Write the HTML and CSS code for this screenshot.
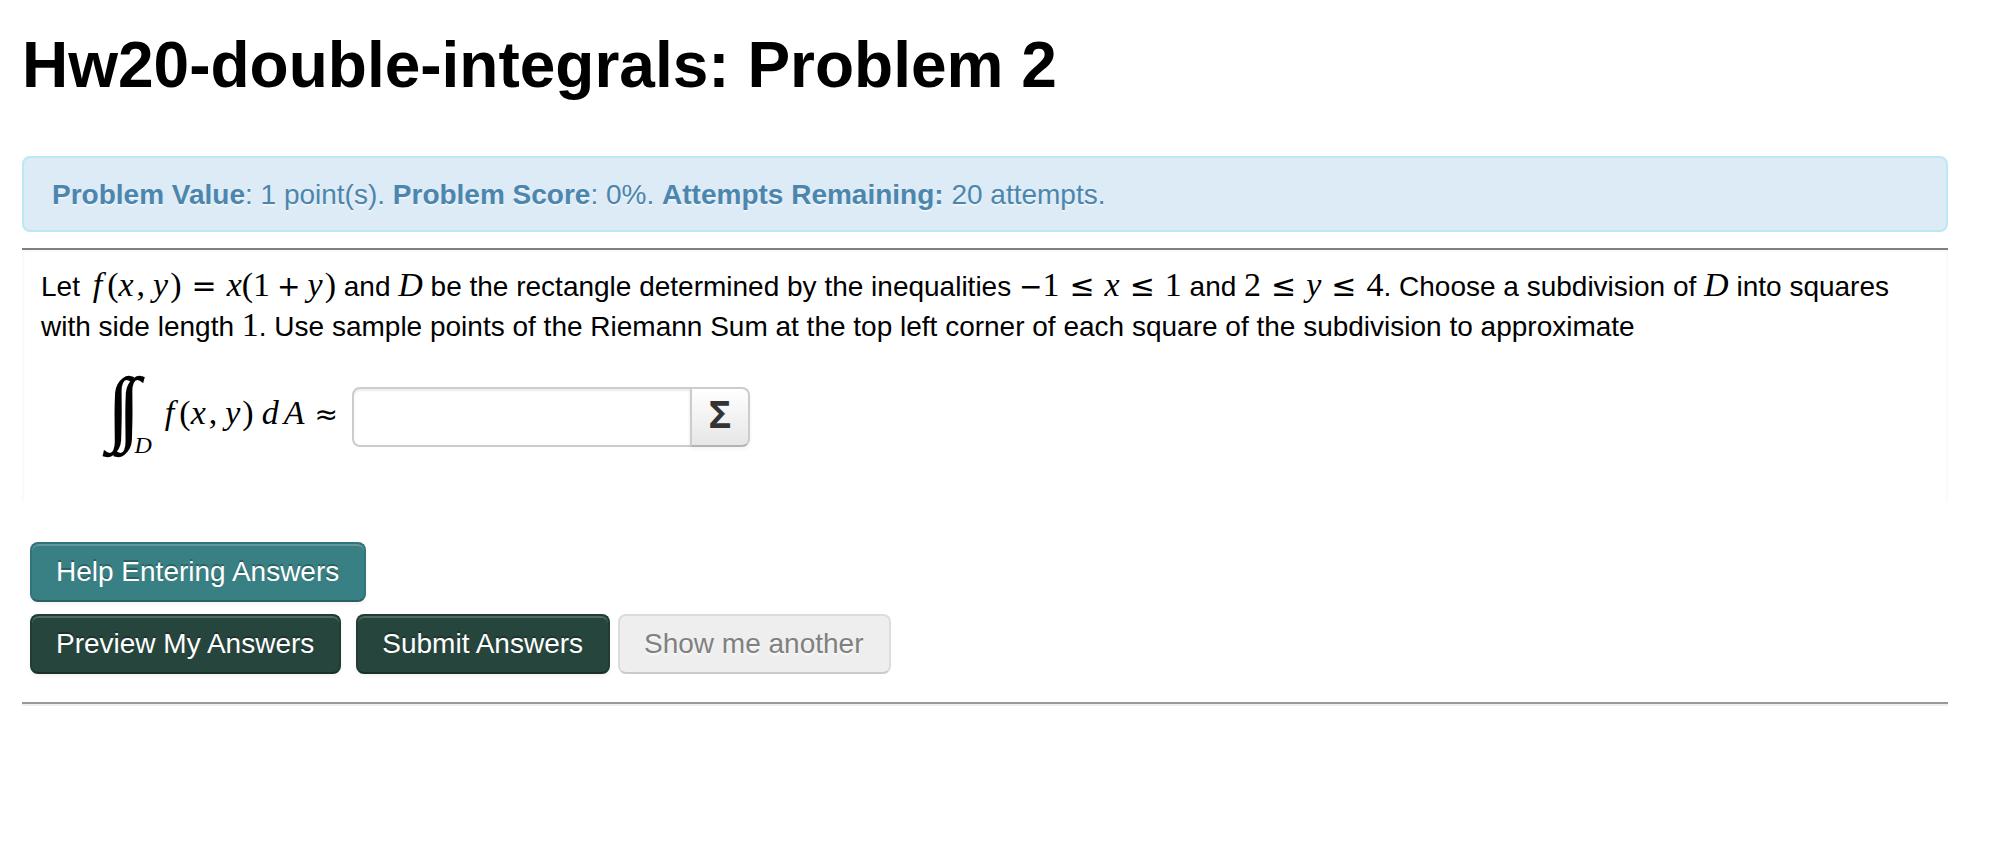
FILE: index.html
```html
<!DOCTYPE html>
<html lang="en">
<head>
<meta charset="utf-8">
<title>Hw20-double-integrals: Problem 2</title>
<link rel="stylesheet" href="styles.css">
</head>
<body>
<main class="page">
  <h1 class="title">Hw20-double-integrals: Problem 2</h1>
  <div class="alert"><strong>Problem Value</strong>: 1 point(s). <strong>Problem Score</strong>: 0%. <strong>Attempts Remaining:</strong> 20 attempts.</div>
  <form class="problem-form">
    <section class="problem">
      <p class="statement">Let <span class="math"><i class="fn">f</i>(<i class="first">x</i>,<i class="arg">y</i>)<span class="rel">=</span><i>x</i>(1<span class="op">+</span><i class="last">y</i>)</span> and <span class="math"><i>D</i></span> be the rectangle determined by the inequalities <span class="math"><span class="sign">−</span>1<span class="rel">≤</span><i>x</i><span class="rel">≤</span>1</span> and <span class="math">2<span class="rel">≤</span><i>y</i><span class="rel">≤</span>4</span>. Choose a subdivision of <span class="math"><i>D</i></span> into squares with side length <span class="math">1</span>. Use sample points of the Riemann Sum at the top left corner of each square of the subdivision to approximate</p>
      <div class="answer">
        <label class="math formula" for="answer"><span class="integral">∫</span><span class="integral">∫</span><sub class="domain">D</sub><span class="integrand"><i class="fn">f</i>(<i class="first">x</i>,<i class="arg">y</i>)<i class="differential">d</i><i class="area">A</i><span class="approx">≈</span></span></label>
        <input class="answer-input" id="answer" type="text">
        <button class="editor-button" type="button" aria-label="Equation editor">Σ</button>
      </div>
    </section>
    <div class="actions">
      <button class="button button-info" type="button">Help Entering Answers</button>
    </div>
    <div class="actions">
      <button class="button button-primary" type="button">Preview My Answers</button>
      <button class="button button-primary button-submit" type="submit">Submit Answers</button>
      <button class="button button-disabled" type="button" disabled>Show me another</button>
    </div>
  </form>
  <hr class="divider">
</main>
</body>
</html>
```
FILE: styles.css
```css
* { box-sizing: border-box; }
body {
  margin: 0;
  background: #fff;
  color: #000;
  font: 28px/40px "Liberation Sans", Arial, sans-serif;
}
.page { padding: 25px 55px 40px 22px; }
.title { margin: 0 0 51px; font-size: 64px; line-height: 80px; font-weight: bold; }
.alert {
  padding: 17px 28px 15px;
  border: 2px solid #bce8f1;
  border-radius: 8px;
  background: #dcebf6;
  color: #4c86ad;
  text-shadow: 0 2px 0 rgba(255, 255, 255, .5);
}
.problem-form { margin-top: 16px; border-top: 2px solid #808080; }
.problem {
  padding: 17px 17px 55px;
  border: solid #fafafa;
  border-width: 0 2px;
  box-shadow: inset 0 2px 2px rgba(0, 0, 0, .03);
}
.statement { margin: 0; }
.math { font-family: "Liberation Serif", "Times New Roman", serif; font-size: 34px; line-height: 1; white-space: nowrap; }
.fn { margin: 0 5px; }
.first { margin-right: 3px; }
.arg { margin: 0 2px 0 8px; }
.last { margin-right: 2px; }
.rel, .op, .sign, .approx { font-family: "DejaVu Sans", sans-serif; font-size: 28px; }
.rel { margin: 0 10px; font-size: 30px; }
.op { margin: 0 7px; }
.answer { display: flex; align-items: center; height: 60px; margin: 40px 0 0 66px; }
.formula { display: flex; align-items: center; height: 60px; }
.integral { margin-right: -12px; padding-bottom: 20px; font-size: 83px; line-height: 60px; font-style: italic; }
.domain { align-self: flex-end; margin: 0 8px -10px 6px; font-size: 24px; line-height: 24px; font-style: italic; }
.integrand { padding-bottom: 8px; }
.differential { margin: 0 5px 0 8px; }
.approx { margin-left: 10px; }
.answer-input {
  width: 340px;
  height: 60px;
  margin-left: 14px;
  padding: 8px 12px;
  border: 2px solid #ccc;
  border-radius: 8px 0 0 8px;
  background: #fff;
  box-shadow: inset 0 2px 2px rgba(0, 0, 0, .075);
  font: inherit;
}
.editor-button {
  width: 60px;
  height: 60px;
  margin-left: -2px;
  padding: 0 0 8px;
  border: 2px solid #ccc;
  border-bottom-color: #b3b3b3;
  border-radius: 0 8px 8px 0;
  background: linear-gradient(#fff, #e6e6e6);
  box-shadow: 0 2px 4px rgba(0, 0, 0, .05);
  color: #333;
  font: bold 38px/1 "Open Sans", sans-serif;
}
.actions { display: flex; margin: 0 8px 12px; }
.problem + .actions { margin-top: 40px; }
.button {
  height: 60px;
  padding: 0 25px 0 24px;
  border: 2px solid;
  border-radius: 8px;
  font: inherit;
  box-shadow: inset 0 2px 0 rgba(255, 255, 255, .2), 0 2px 4px rgba(0, 0, 0, .05);
}
.button-info { border-color: #32747a #32747a #2a6064; background: #388083; color: #fff; text-shadow: 0 -2px 0 rgba(0, 0, 0, .25); }
.button-primary { border-color: #203c34 #203c34 #1a302a; background: #26453c; color: #fff; text-shadow: 0 -2px 0 rgba(0, 0, 0, .25); }
.button-submit { margin: 0 8px 0 15px; }
.button-disabled { border-color: #dcdcdc #dcdcdc #cbcbcb; background: #eee; color: #808080; box-shadow: none; text-shadow: 0 2px 2px rgba(255, 255, 255, .75); }
.divider { margin: 28px 0 0; border: solid; border-width: 2px 0; border-color: #999 transparent #eee; }
```
